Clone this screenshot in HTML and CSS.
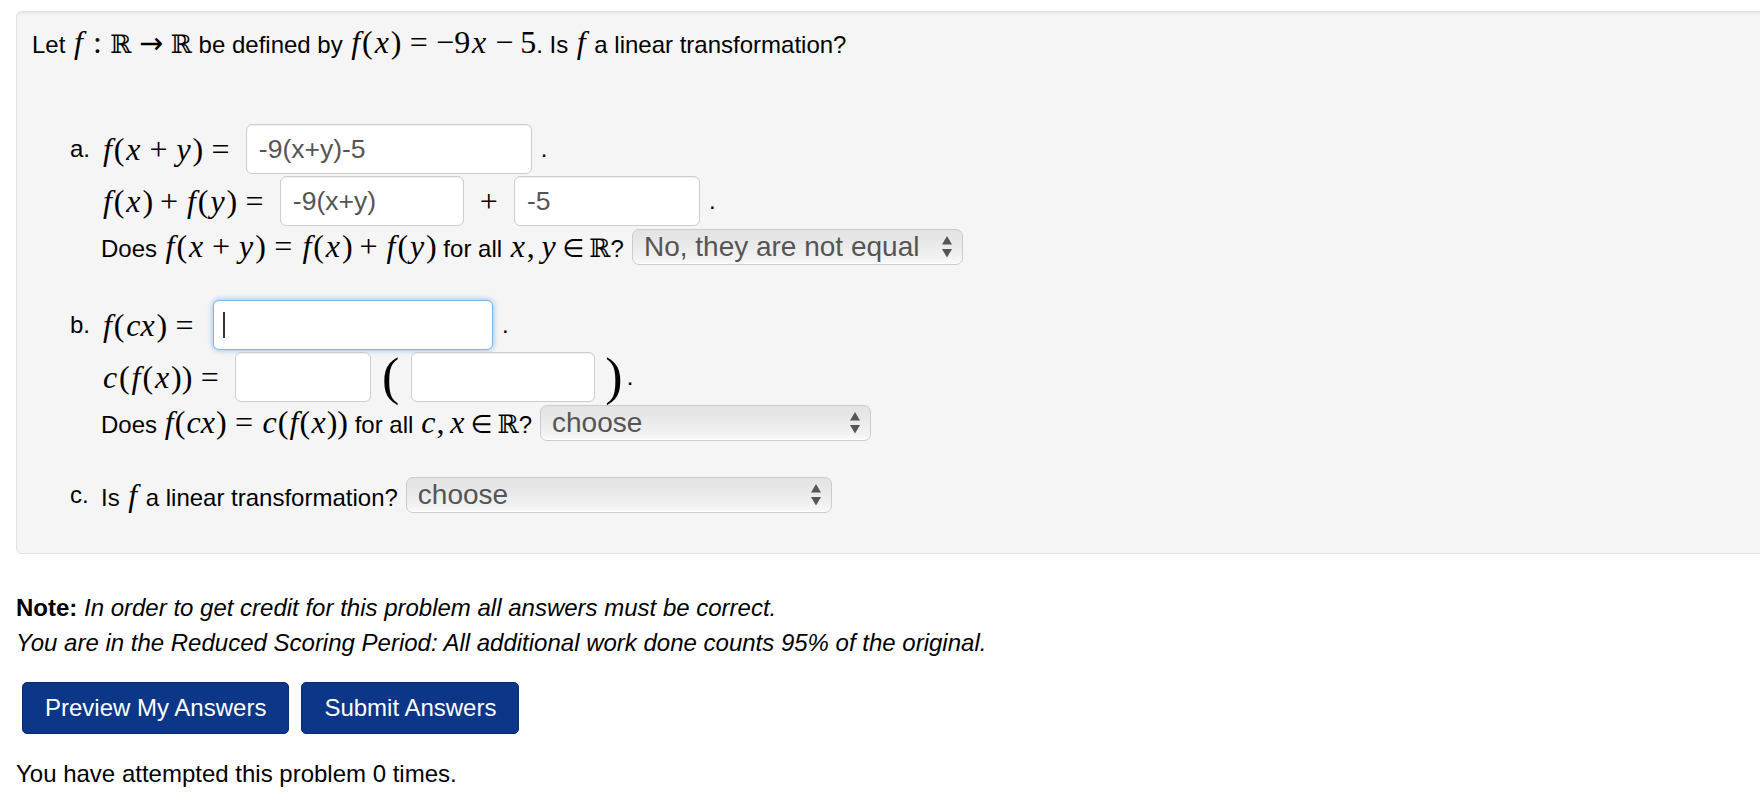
FILE: index.html
```html
<!DOCTYPE html>
<html lang="en">
<head>
<meta charset="utf-8">
<title>Problem</title>
<link rel="stylesheet" href="styles.css">
</head>
<body>
<div class="problem">
  <p class="intro">Let <span class="m"><i>f</i><span class="rel">:</span><span class="bb">ℝ</span><span class="rel arr">→</span><span class="bb">ℝ</span></span> be defined by <span class="m"><i>f</i>(<i>x</i>)<span class="rel">=</span>−9<i>x</i><span class="bin">−</span>5</span>. Is <span class="m"><i>f</i></span> a linear transformation?</p>

  <ol class="parts">
    <li class="part">
      <span class="marker">a.</span>
      <div class="row tall">
        <span class="m"><i>f</i>(<i>x</i><span class="bin">+</span><i>y</i>)<span class="rel">=</span></span>
        <input class="ans w286" type="text" value="-9(x+y)-5">
        <span class="dot">.</span>
      </div>
      <div class="row tall">
        <span class="m"><i>f</i>(<i>x</i>)<span class="bin">+</span><i>f</i>(<i>y</i>)<span class="rel">=</span></span>
        <input class="ans w184" type="text" value="-9(x+y)">
        <span class="m plus">+</span>
        <input class="ans w186 nogap" type="text" value="-5">
        <span class="dot">.</span>
      </div>
      <div class="row short">
        <span class="lbl">Does <span class="m"><i>f</i>(<i>x</i><span class="bin">+</span><i>y</i>)<span class="rel">=</span><i>f</i>(<i>x</i>)<span class="bin">+</span><i>f</i>(<i>y</i>)</span> for all <span class="m"><i>x</i>,<span class="thin"></span><i>y</i><span class="rel el">∈</span><span class="bb">ℝ</span></span>?</span>
        <div class="select w331"><span class="val">No, they are not equal</span><svg class="arrows" width="10" height="22" viewBox="0 0 10 22"><polygon points="5,0 10,8.5 0,8.5"/><polygon points="0,13 10,13 5,21.5"/></svg></div>
      </div>
    </li>

    <li class="part">
      <span class="marker">b.</span>
      <div class="row tall">
        <span class="m"><i>f</i>(<i>cx</i>)<span class="rel">=</span></span>
        <input class="ans w280 focus wide-gap" type="text" value="">
        <span class="dot">.</span>
      </div>
      <div class="row tall">
        <span class="m"><i>c</i>(<i>f</i>(<i>x</i>))<span class="rel">=</span></span>
        <input class="ans w136" type="text" value="">
        <span class="big open">(</span>
        <input class="ans w184 nogap" type="text" value="">
        <span class="big close">)</span><span class="dot tight">.</span>
      </div>
      <div class="row short">
        <span class="lbl">Does <span class="m snug"><i>f</i>(<i>cx</i>)<span class="rel">=</span><i>c</i>(<i>f</i>(<i>x</i>))</span> for all <span class="m snug"><i>c</i>,<span class="thin"></span><i>x</i><span class="rel el">∈</span><span class="bb">ℝ</span></span>?</span>
        <div class="select w331"><span class="val">choose</span><svg class="arrows" width="10" height="22" viewBox="0 0 10 22"><polygon points="5,0 10,8.5 0,8.5"/><polygon points="0,13 10,13 5,21.5"/></svg></div>
      </div>
    </li>

    <li class="part">
      <span class="marker">c.</span>
      <div class="row short">
        <span class="lbl">Is <span class="m"><i>f</i></span> a linear transformation?</span>
        <div class="select w426"><span class="val">choose</span><svg class="arrows" width="10" height="22" viewBox="0 0 10 22"><polygon points="5,0 10,8.5 0,8.5"/><polygon points="0,13 10,13 5,21.5"/></svg></div>
      </div>
    </li>
  </ol>
</div>

<div class="messages">
  <p><b>Note:</b> <i>In order to get credit for this problem all answers must be correct.</i></p>
  <p><i>You are in the Reduced Scoring Period: All additional work done counts 95% of the original.</i></p>
</div>

<div class="buttons">
  <button class="btn" type="button">Preview My Answers</button>
  <button class="btn" type="button">Submit Answers</button>
</div>

<p class="attempts">You have attempted this problem 0 times.</p>
</body>
</html>
```

FILE: styles.css
```css
* { box-sizing: border-box; }

html, body { margin: 0; }

body {
  width: 1760px;
  height: 792px;
  overflow: hidden;
  padding: 11px 0 0 16px;
  background: #fff;
  color: #000;
  font-family: "Liberation Sans", Arial, sans-serif;
  font-size: 24px;
}

/* problem well */
.problem {
  margin-right: -20px;
  padding: 14px 0 38px 15px;
  background: #f5f5f5;
  border: 1px solid #e3e3e3;
  border-radius: 5px 0 0 5px;
  box-shadow: inset 0 2px 2px rgba(0, 0, 0, 0.05);
}

.intro {
  margin: 0;
  line-height: 32px;
}

/* math */
.m {
  font-family: "Liberation Serif", "DejaVu Serif", serif;
  font-size: 32px;
  line-height: 32px;
  white-space: nowrap;
}
.m i { font-style: italic; padding: 0 0.06em; }
.m.snug i { padding: 0 0.035em; }
.m .bin { margin: 0 0.22em; }
.m .rel { margin: 0 0.26em; }
.m .thin { display: inline-block; width: 0.15em; }
.m .arr {
  font-family: "DejaVu Sans", sans-serif;
  font-size: 0.9em;
}
.m .el {
  margin: 0 0.2em;
  font-family: "DejaVu Sans", sans-serif;
  font-size: 0.78em;
}
.bb {
  font-family: "DejaVu Serif", serif;
  font-size: 0.8em;
}

/* parts list */
.parts {
  list-style: none;
  margin: 62px 0 0;
  padding: 0 0 0 38px;
}

.part {
  display: grid;
  grid-template-columns: 31px auto;
  justify-content: start;
}
.part + .part { margin-top: 32px; }

.marker {
  grid-column: 1;
  grid-row: 1;
  align-self: center;
}

.row {
  grid-column: 2;
  display: flex;
  align-items: center;
  white-space: nowrap;
}
.row.tall { height: 52px; }
.row.short { height: 40px; }

/* answer blanks */
.ans {
  height: 50px;
  margin: 0 0 0 8px;
  padding: 0 12px;
  border: 1px solid #cdcdcd;
  border-radius: 6px;
  background: #fff;
  box-shadow: inset 0 1px 1px rgba(0, 0, 0, 0.06);
  color: #555;
  font-family: "Liberation Sans", Arial, sans-serif;
  font-size: 26.5px;
  outline: none;
}
.ans.nogap { margin-left: 0; }
.ans.wide-gap { margin-left: 11px; }
.ans.focus {
  border-color: #7fb3ea;
  box-shadow: 0 0 5px 1px rgba(110, 170, 235, 0.6);
  background: linear-gradient(#333, #333) no-repeat 9px center / 2px 26px, #fff;
}

.w286 { width: 286px; }
.w184 { width: 184px; }
.w186 { width: 186px; }
.w280 { width: 280px; }
.w136 { width: 136px; }
.w331 { width: 331px; }
.w426 { width: 426px; }

.dot { margin-left: 9px; }
.dot.tight { margin-left: 4px; }

.plus { margin: 0 16px 0 16px; }

.big {
  font-family: "Liberation Serif", "DejaVu Serif", serif;
  font-size: 52px;
  line-height: 1;
}
.big.open { margin: 0 12px 0 11px; }
.big.close { margin-left: 10px; }

/* selects */
.select {
  height: 36px;
  margin-left: 8px;
  padding: 0 10px 0 11px;
  display: flex;
  align-items: center;
  justify-content: space-between;
  border: 1px solid #cbcbcb;
  border-radius: 7px;
  background: linear-gradient(#e3e3e3 0%, #eaeaea 45%, #f3f3f3 85%, #fbfbfb 100%);
  box-shadow: inset 0 -1px 0 rgba(255, 255, 255, 0.8);
  color: #555;
  font-size: 28px;
}
.arrows { fill: #555; flex: none; }

/* messages */
.messages { margin-top: 36px; }
.messages p {
  margin: 0;
  line-height: 35px;
}

.buttons {
  margin: 22px 0 0 6px;
  display: flex;
  gap: 12px;
}
.btn {
  height: 52px;
  padding: 0 22px;
  border: 1px solid #082c6e;
  border-radius: 5px;
  background: #0c3687;
  color: #fff;
  font-family: "Liberation Sans", Arial, sans-serif;
  font-size: 24px;
}

.attempts {
  margin: 23px 0 0;
  line-height: 34px;
}
```
